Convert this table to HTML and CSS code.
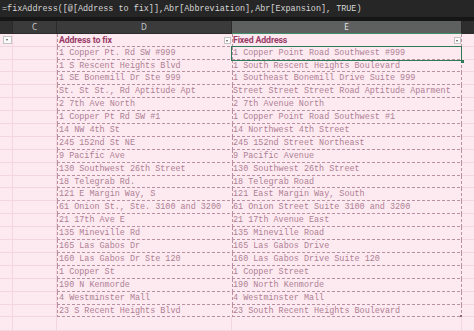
FILE: index.html
```html
<!DOCTYPE html>
<html>
<head>
<meta charset="utf-8">
<link rel="stylesheet" href="styles.css">
</head>
<body>
<div class="fbar">=fixAddress([@[Address to fix]],Abr[Abbreviation],Abr[Expansion], TRUE)</div>
<div class="band"></div>
<div class="colheads">
  <div class="ch ch-b"></div>
  <div class="ch">C</div>
  <div class="ch">D</div>
  <div class="ch ch-sel">E</div>
  <div class="ch ch-f"></div>
</div>
<div class="sheet">
  <div class="c a head"><span class="dd"></span></div><div class="c cc head"></div><div class="c d th">Address to fix<span class="dd"></span></div><div class="c e th">Fixed Address<span class="dd"></span></div><div class="c f head"></div>

  <div class="c a"></div><div class="c cc"></div><div class="c d">1 Copper Pt. Rd SW #999</div><div class="c e sel">1 Copper Point Road Southwest #999</div><div class="c f"></div>
  <div class="c a"></div><div class="c cc"></div><div class="c d">1 S Rescent Heights Blvd</div><div class="c e">1 South Rescent Heights Boulevard</div><div class="c f"></div>
  <div class="c a"></div><div class="c cc"></div><div class="c d">1 SE Bonemill Dr Ste 999</div><div class="c e">1 Southeast Bonemill Drive Suite 999</div><div class="c f"></div>
  <div class="c a"></div><div class="c cc"></div><div class="c d">St. St St., Rd Aptitude Apt</div><div class="c e">Street Street Street Road Aptitude Aparment</div><div class="c f"></div>
  <div class="c a"></div><div class="c cc"></div><div class="c d">2 7th Ave North</div><div class="c e">2 7th Avenue North</div><div class="c f"></div>
  <div class="c a"></div><div class="c cc"></div><div class="c d">1 Copper Pt Rd SW #1</div><div class="c e">1 Copper Point Road Southwest #1</div><div class="c f"></div>
  <div class="c a"></div><div class="c cc"></div><div class="c d">14 NW 4th St</div><div class="c e">14 Northwest 4th Street</div><div class="c f"></div>
  <div class="c a"></div><div class="c cc"></div><div class="c d">245 152nd St NE</div><div class="c e">245 152nd Street Northeast</div><div class="c f"></div>
  <div class="c a"></div><div class="c cc"></div><div class="c d">9 Pacific Ave</div><div class="c e">9 Pacific Avenue</div><div class="c f"></div>
  <div class="c a"></div><div class="c cc"></div><div class="c d">130 Southwest 26th Street</div><div class="c e">130 Southwest 26th Street</div><div class="c f"></div>
  <div class="c a"></div><div class="c cc"></div><div class="c d">18 Telegrab Rd.</div><div class="c e">18 Telegrab Road</div><div class="c f"></div>
  <div class="c a"></div><div class="c cc"></div><div class="c d">121 E Margin Way, S</div><div class="c e">121 East Margin Way, South</div><div class="c f"></div>
  <div class="c a"></div><div class="c cc"></div><div class="c d">61 Onion St., Ste. 3100 and 3200</div><div class="c e">61 Onion Street Suite 3100 and 3200</div><div class="c f"></div>
  <div class="c a"></div><div class="c cc"></div><div class="c d">21 17th Ave E</div><div class="c e">21 17th Avenue East</div><div class="c f"></div>
  <div class="c a"></div><div class="c cc"></div><div class="c d">135 Mineville Rd</div><div class="c e">135 Mineville Road</div><div class="c f"></div>
  <div class="c a"></div><div class="c cc"></div><div class="c d">165 Las Gabos Dr</div><div class="c e">165 Las Gabos Drive</div><div class="c f"></div>
  <div class="c a"></div><div class="c cc"></div><div class="c d">160 Las Gabos Dr Ste 120</div><div class="c e">160 Las Gabos Drive Suite 120</div><div class="c f"></div>
  <div class="c a"></div><div class="c cc"></div><div class="c d">1 Copper St</div><div class="c e">1 Copper Street</div><div class="c f"></div>
  <div class="c a"></div><div class="c cc"></div><div class="c d">190 N Kenmorde</div><div class="c e">190 North Kenmorde</div><div class="c f"></div>
  <div class="c a"></div><div class="c cc"></div><div class="c d">4 Westminster Mall</div><div class="c e">4 Westminster Mall</div><div class="c f"></div>
  <div class="c a"></div><div class="c cc"></div><div class="c d">23 S Recent Heights Blvd</div><div class="c e end">23 South Recent Heights Boulevard</div><div class="c f"></div>

  <div class="c a"></div><div class="c cc"></div><div class="c blank"></div><div class="c blank"></div><div class="c f"></div>
</div>
</body>
</html>
```
FILE: styles.css
```css
:root {
  --pink: #fdeaf0;
  --grid: #f4d6df;
  --dash: #b98fa2;
  --text: #ae7f95;
  --head: #9a3d69;
}
html, body {
  margin: 0;
  padding: 0;
  background: var(--pink);
  width: 474px;
  height: 331px;
  overflow: hidden;
}
.fbar {
  height: 17px;
  box-sizing: border-box;
  padding: 3px 0 0 2px;
  background: #262626;
  color: #d6d6d6;
  font-family: "Liberation Mono", "DejaVu Sans Mono", monospace;
  font-size: 8.45px;
  line-height: 12px;
  white-space: nowrap;
}
.band {
  height: 4px;
  background: #161616;
}
.colheads {
  display: grid;
  grid-template-columns: 13px 44px 175px 230px 1fr;
  height: 13px;
  background: #3b3b3b;
}
.ch {
  box-sizing: border-box;
  border-right: 1px solid #2a2a2a;
  border-bottom: 1px solid #2c2c2c;
  color: #c9c9c9;
  font-family: "Noto Sans", "DejaVu Sans", sans-serif;
  font-size: 8px;
  line-height: 12px;
  text-align: center;
}
.ch-b { background: #303030; }
.ch-sel {
  background: #5d605f;
  color: #e4e4e4;
  border-bottom: 1px solid #3f8f67;
}
.ch-f { background: #2e2e2e; border-right: 0; }

.sheet {
  display: grid;
  grid-template-columns: 13px 44px 175px 230px 1fr;
  grid-template-rows: 12.7px repeat(21, 12.9px) 14px;
}
.c {
  box-sizing: border-box;
  min-width: 0;
  white-space: nowrap;
  overflow: hidden;
  font-family: "Liberation Mono", "DejaVu Sans Mono", monospace;
  font-size: 8.45px;
  line-height: 12.9px;
  color: var(--text);
}
.a, .cc, .f, .blank {
  border-right: 1px solid var(--grid);
  border-bottom: 1px solid var(--grid);
}
.f { border-right: 0; }
.a.head {
  display: flex;
  align-items: center;
  justify-content: center;
  padding-left: 2px;
}
.d, .e {
  padding-left: 2px;
  background-image:
    repeating-linear-gradient(90deg, var(--dash) 0 3px, transparent 3px 5px),
    repeating-linear-gradient(180deg, var(--dash) 0 3px, transparent 3px 5px);
  background-size: 100% 1px, 1px 100%;
  background-position: left bottom, left top;
  background-repeat: no-repeat;
}
.e {
  padding-left: 1px;
  background-image:
    repeating-linear-gradient(90deg, var(--dash) 0 3px, transparent 3px 5px),
    repeating-linear-gradient(180deg, var(--dash) 0 3px, transparent 3px 5px),
    repeating-linear-gradient(180deg, var(--dash) 0 3px, transparent 3px 5px);
  background-size: 100% 1px, 1px 100%, 1px 100%;
  background-position: left bottom, left top, right top;
}
.th {
  display: flex;
  align-items: center;
  justify-content: space-between;
  padding-right: 1px;
  font-family: "Roboto", "Noto Sans", sans-serif;
  font-weight: 700;
  font-size: 8.8px;
  letter-spacing: -0.15px;
  color: var(--head);
  line-height: 12px;
}
.dd {
  width: 7px;
  height: 7px;
  box-sizing: border-box;
  background: #fbfbfb;
  border: 1px solid #c4c4c4;
  position: relative;
  flex: none;
}
.dd::after {
  content: "";
  position: absolute;
  left: 1px;
  top: 2px;
  border-left: 1.5px solid transparent;
  border-right: 1.5px solid transparent;
  border-top: 2px solid #555;
}
.a .dd { width: 9px; height: 8px; }
.a .dd::after { left: 2px; }

.sel { position: relative; overflow: visible; }
.sel::after {
  content: "";
  position: absolute;
  left: -1px;
  top: -1px;
  right: 0;
  bottom: -1px;
  border: 1.5px solid #2f7b57;
}
.sel::before {
  content: "";
  position: absolute;
  right: -2px;
  bottom: -3px;
  width: 3px;
  height: 3px;
  background: #2f7b57;
  z-index: 1;
}
.end { position: relative; overflow: visible; }
.end::after {
  content: "";
  position: absolute;
  right: 0;
  bottom: 0;
  width: 2px;
  height: 2px;
  background: #8d6a7a;
}
```
